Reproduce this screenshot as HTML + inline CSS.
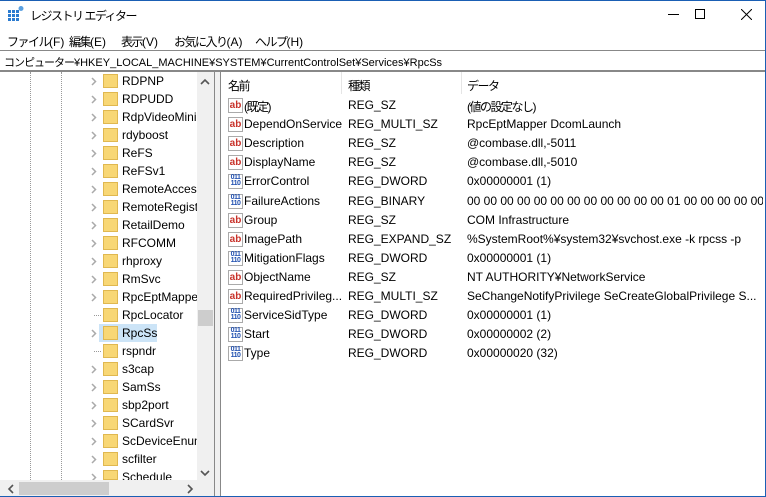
<!DOCTYPE html><html><head><meta charset="utf-8"><style>
*{margin:0;padding:0;box-sizing:border-box}
body{width:766px;height:497px;overflow:hidden;background:#fff;font-family:"Liberation Sans","Noto Sans CJK JP",sans-serif;font-size:12px;color:#000;position:relative}
.a{position:absolute;white-space:nowrap}
.j{letter-spacing:-1.5px;font-size:12px}
.fold{position:absolute;width:15px;height:14px;background:#f8d775;border:1px solid #e0b850}
.ico{position:absolute;left:228px;width:15px;height:15px;border:1px solid #aaa;background:#fff;font-size:10px;font-weight:bold;line-height:13px;text-align:center;letter-spacing:0}
.ab{color:#c8322a}
.bi{color:#2050b0;font-size:7px;line-height:6px;letter-spacing:-0.5px}
</style></head><body>
<div class="a" style="left:0;top:0;width:766px;height:497px;border-right:1px solid #1a5fb4;border-bottom:1px solid #1a5fb4;border-top:1px solid #1a5fb4"></div>
<svg class="a" style="left:8px;top:6px" width="16" height="16"><g fill="#2b7bd0"><rect x="0" y="4" width="3" height="3"/><rect x="4" y="4" width="3" height="3"/><rect x="8" y="4" width="3" height="3"/><rect x="0" y="8" width="3" height="3"/><rect x="4" y="8" width="3" height="3"/><rect x="8" y="8" width="3" height="3"/><rect x="0" y="12" width="3" height="3"/><rect x="4" y="12" width="3" height="3"/><rect x="8" y="12" width="3" height="3"/><circle cx="13" cy="2.5" r="2.5" fill="#5aa0e0"/></g></svg>
<div class="a j" style="left:30px;top:7px">レジストリ エディター</div>
<div class="a" style="left:668px;top:14px;width:11px;height:1px;background:#000"></div>
<div class="a" style="left:695px;top:9px;width:10px;height:10px;border:1px solid #000"></div>
<svg class="a" style="left:741px;top:9px" width="11" height="11"><path d="M0 0L11 11M11 0L0 11" stroke="#000" stroke-width="1"/></svg>
<div class="a" style="left:7px;top:33px"><span class="j">ファイル</span>(F)</div>
<div class="a" style="left:69px;top:33px"><span class="j">編集</span>(E)</div>
<div class="a" style="left:121px;top:33px"><span class="j">表示</span>(V)</div>
<div class="a" style="left:174px;top:33px"><span class="j">お気に入り</span>(A)</div>
<div class="a" style="left:255px;top:33px"><span class="j">ヘルプ</span>(H)</div>
<div class="a" style="left:0;top:50px;width:765px;height:1px;background:#888"></div>
<div class="a" style="left:4px;top:54px;font-size:11px"><span class="j" style="font-size:11px;letter-spacing:-1px">コンピューター</span>¥HKEY_LOCAL_MACHINE¥SYSTEM¥CurrentControlSet¥Services¥RpcSs</div>
<div class="a" style="left:0;top:70px;width:765px;height:2px;background:#888"></div>
<div class="a" style="left:30px;top:72px;height:408px;border-left:1px dotted #999"></div>
<div class="a" style="left:61px;top:72px;height:408px;border-left:1px dotted #999"></div>
<div class="a" style="left:99px;top:324px;width:58px;height:18px;background:#cce4f7"></div>
<div id="tree"></div>
<div class="a" style="left:197px;top:72px;width:17px;height:408px;background:#f0f0f0"></div>
<svg class="a" style="left:200px;top:78px" width="10" height="7"><path d="M1 6L5 2L9 6" stroke="#555" stroke-width="1.6" fill="none"/></svg>
<div class="a" style="left:198px;top:310px;width:15px;height:16px;background:#cdcdcd"></div>
<svg class="a" style="left:200px;top:470px" width="10" height="7"><path d="M1 1L5 5L9 1" stroke="#555" stroke-width="1.6" fill="none"/></svg>
<div class="a" style="left:0;top:480px;width:214px;height:16px;background:#f0f0f0"></div>
<div class="a" style="left:19px;top:482px;width:90px;height:13px;background:#cdcdcd"></div>
<svg class="a" style="left:7px;top:484px" width="7" height="10"><path d="M6 1L2 5L6 9" stroke="#555" stroke-width="1.6" fill="none"/></svg>
<svg class="a" style="left:187px;top:484px" width="7" height="10"><path d="M1 1L5 5L1 9" stroke="#555" stroke-width="1.6" fill="none"/></svg>
<div class="a" style="left:214px;top:72px;width:7px;height:424px;background:#f0f0f0;border-left:1px solid #888;border-right:1px solid #888"></div>
<div class="a" style="left:341px;top:72px;width:1px;height:22px;background:#e5e5e5"></div>
<div class="a" style="left:461px;top:72px;width:1px;height:22px;background:#e5e5e5"></div>
<div class="a j" style="left:228px;top:77px">名前</div>
<div class="a j" style="left:348px;top:77px">種類</div>
<div class="a j" style="left:467px;top:77px">データ</div>
<div id="list"></div>
<script>
var t=[["RDPNP",1],["RDPUDD",1],["RdpVideoMini",1],["rdyboost",1],["ReFS",1],["ReFSv1",1],["RemoteAccess",1],["RemoteRegistr",1],["RetailDemo",1],["RFCOMM",1],["rhproxy",1],["RmSvc",1],["RpcEptMappe",1],["RpcLocator",0],["RpcSs",1],["rspndr",0],["s3cap",1],["SamSs",1],["sbp2port",1],["SCardSvr",1],["ScDeviceEnum",1],["scfilter",1],["Schedule",1]];
var h="";t.forEach(function(r,i){var y=72+i*18;if(y>470)return;
h+=r[1]?'<svg class="a" style="left:91px;top:'+(y+5)+'px" width="6" height="9"><path d="M1 1L4.5 4.5L1 8" stroke="#aaa" stroke-width="1.5" fill="none"/></svg>':'<div class="a" style="left:94px;top:'+(y+9)+'px;width:7px;border-top:1px dotted #999"></div>';
h+='<div class="fold" style="left:103px;top:'+(y+2)+'px;height:'+Math.min(14,478-y)+'px"></div><div class="a" style="left:122px;top:'+(y+2)+'px;width:75px;overflow:hidden">'+r[0]+'</div>';});
document.getElementById("tree").innerHTML=h;
var l=[["ab","<span class=j>(既定)</span>","REG_SZ","<span class=j>(値の設定なし)</span>"],["ab","DependOnService","REG_MULTI_SZ","RpcEptMapper DcomLaunch"],["ab","Description","REG_SZ","@combase.dll,-5011"],["ab","DisplayName","REG_SZ","@combase.dll,-5010"],["b","ErrorControl","REG_DWORD","0x00000001 (1)"],["b","FailureActions","REG_BINARY","00 00 00 00 00 00 00 00 00 00 00 00 01 00 00 00 00 00..."],["ab","Group","REG_SZ","COM Infrastructure"],["ab","ImagePath","REG_EXPAND_SZ","%SystemRoot%¥system32¥svchost.exe -k rpcss -p"],["b","MitigationFlags","REG_DWORD","0x00000001 (1)"],["ab","ObjectName","REG_SZ","NT AUTHORITY¥NetworkService"],["ab","RequiredPrivileg...","REG_MULTI_SZ","SeChangeNotifyPrivilege SeCreateGlobalPrivilege S..."],["b","ServiceSidType","REG_DWORD","0x00000001 (1)"],["b","Start","REG_DWORD","0x00000002 (2)"],["b","Type","REG_DWORD","0x00000020 (32)"]];
h="";l.forEach(function(r,i){var y=98+i*19.1;
h+=r[0]=="ab"?'<div class="ico ab" style="top:'+y+'px">ab</div>':'<div class="ico bi" style="top:'+y+'px">011<br>110</div>';
h+='<div class="a" style="left:244px;top:'+y+'px;width:100px;overflow:hidden">'+r[1]+'</div><div class="a" style="left:348px;top:'+y+'px">'+r[2]+'</div><div class="a" style="left:467px;top:'+y+'px;width:296px;overflow:hidden">'+r[3]+'</div>';});
document.getElementById("list").innerHTML=h;
</script>
</body></html>
